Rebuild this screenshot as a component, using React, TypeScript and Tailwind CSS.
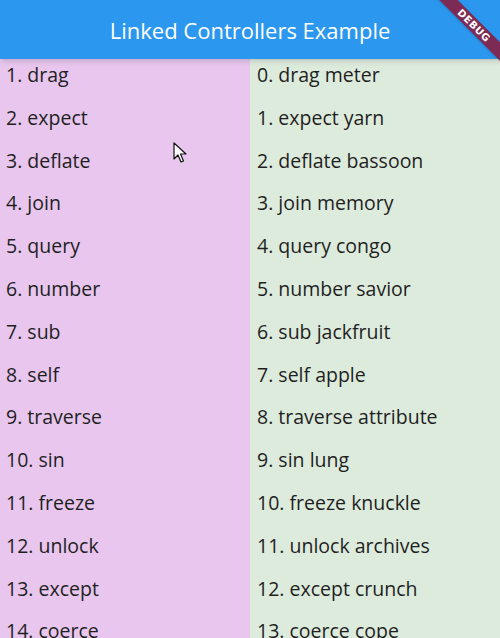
import React from 'react';

const words = [
  'drag',
  'expect',
  'deflate',
  'join',
  'query',
  'number',
  'sub',
  'self',
  'traverse',
  'sin',
  'freeze',
  'unlock',
  'except',
  'coerce',
];

const partners = [
  'meter',
  'yarn',
  'bassoon',
  'memory',
  'congo',
  'savior',
  'jackfruit',
  'apple',
  'attribute',
  'lung',
  'knuckle',
  'archives',
  'crunch',
  'cope',
];

const font = { fontFamily: '"Open Sans", "Noto Sans", sans-serif' };

const DebugBanner: React.FC = () => (
  <div className="pointer-events-none absolute inset-0 z-20 overflow-hidden">
    <div className="absolute left-[414px] top-[19px] flex h-[13px] w-[120px] rotate-45 items-center justify-center bg-[#7d2b54] shadow-sm">
      <span className="text-[10px] font-bold leading-none tracking-[0.5px] text-white" style={{ fontFamily: '"DejaVu Sans", sans-serif' }}>
        DEBUG
      </span>
    </div>
  </div>
);

const Cursor: React.FC = () => (
  <svg className="pointer-events-none absolute left-[173px] top-[142px] z-20" width="16" height="22" viewBox="0 0 16 22">
    <path
      d="M1 1 L1 17 L5 13 L8 20 L10.5 19 L7.5 12 L13 12 Z"
      fill="#ffffff"
      stroke="#111111"
      strokeWidth="1.2"
      strokeLinejoin="round"
    />
  </svg>
);

export default function App() {
  return (
    <div className="relative h-[638px] w-[500px] overflow-hidden bg-white" style={font}>
      <header className="relative z-10 flex h-[59px] items-center justify-center bg-[#2b97ee] pt-[2px] shadow-md">
        <h1 className="text-[22px] font-normal text-white">Linked Controllers Example</h1>
      </header>

      <div className="flex h-[579px]">
        <div className="w-[250px] overflow-hidden bg-[#e8c6ee]">
          <ul className="-mt-[5px]">
            {words.map((w, i) => (
              <li key={w} className="h-[42.8px] px-[6px] text-[19.5px] leading-[42.8px] text-[#1f1f1f]">
                {i + 1}. {w}
              </li>
            ))}
          </ul>
        </div>
        <div className="w-[250px] overflow-hidden bg-[#ddebdd]">
          <ul className="-mt-[5px]">
            {words.map((w, i) => (
              <li key={w} className="h-[42.8px] px-[7px] text-[19.5px] leading-[42.8px] text-[#1f1f1f]">
                {i}. {w} {partners[i]}
              </li>
            ))}
          </ul>
        </div>
      </div>

      <DebugBanner />
      <Cursor />
    </div>
  );
}
